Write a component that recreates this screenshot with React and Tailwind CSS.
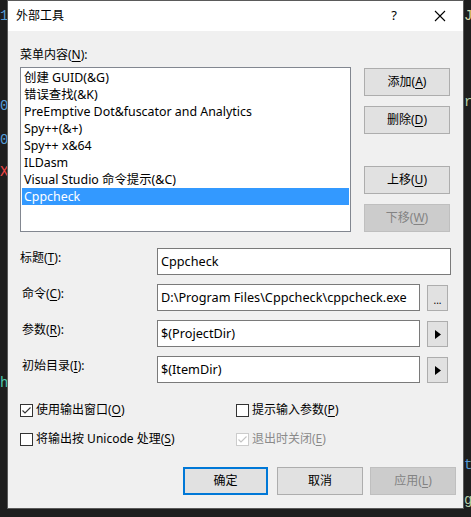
import React from "react";

const font = { fontFamily: "'Noto Sans', 'Noto Sans CJK SC', sans-serif" };

const items = [
  "创建 GUID(&G)",
  "错误查找(&K)",
  "PreEmptive Dot&fuscator and Analytics",
  "Spy++(&+)",
  "Spy++ x&64",
  "ILDasm",
  "Visual Studio 命令提示(&C)",
  "Cppcheck",
];

function U({ children }) {
  return <span className="underline underline-offset-2">{children}</span>;
}

function SideButton({ children, disabled }) {
  return (
    <div
      className={`h-[28px] w-[86px] flex items-center justify-center border text-[12px] ${
        disabled
          ? "bg-[#cccccc] border-[#bfbfbf] text-[#838383]"
          : "bg-[#e1e1e1] border-[#adadad] text-black"
      }`}
    >
      {children}
    </div>
  );
}

function Check({ checked, disabled, children }) {
  return (
    <div className={`flex items-center gap-[3px] h-[16px] ${disabled ? "text-[#8a8a8a]" : "text-black"}`}>
      <div
        className={`w-[13px] h-[13px] border bg-white flex items-center justify-center ${
          disabled ? "border-[#cccccc] bg-[#f0f0f0]" : "border-[#333333]"
        }`}
      >
        {checked && (
          <svg width="11" height="11" viewBox="0 0 11 11">
            <path
              d="M1.5 5.5 L4 8 L9.5 2.5"
              fill="none"
              stroke={disabled ? "#c4c4c4" : "#333333"}
              strokeWidth="1.1"
            />
          </svg>
        )}
      </div>
      <span className="text-[12px] leading-[16px]">{children}</span>
    </div>
  );
}

function FieldRow({ label, value, button, wide, indent }) {
  return (
    <div className="flex items-start h-[27px]">
      <div className={`w-[137px] text-[12px] leading-[16px] pt-[2px] ${indent ? "pl-[2px]" : ""}`}>{label}</div>
      <div
        className={`h-[27px] ${wide ? "w-[294px]" : "w-[263px]"} border border-[#7a7a7a] bg-white flex items-center pl-[3px] text-[12.7px] whitespace-nowrap overflow-hidden`}
      >
        {value}
      </div>
      {button && (
        <div className="ml-[7px] mt-[1px] w-[21px] h-[26px] border border-[#adadad] bg-[#e1e1e1] flex items-center justify-center text-[10px]">
          {button === "dots" ? (
            <span className="leading-none pt-[4px]">...</span>
          ) : (
            <svg width="6" height="9" viewBox="0 0 6 9">
              <path d="M0 0 L6 4.5 L0 9 Z" fill="#000" />
            </svg>
          )}
        </div>
      )}
    </div>
  );
}

export default function App() {
  return (
    <div className="relative w-[471px] h-[517px] bg-[#1e1e1e] overflow-hidden" style={font}>
      <div className="absolute left-0 top-[6px] text-[#569cd6] text-[14px] font-mono">1</div>
      <div className="absolute left-0 top-[96px] text-[#569cd6] text-[14px] font-mono">0</div>
      <div className="absolute left-0 top-[130px] text-[#569cd6] text-[14px] font-mono">0</div>
      <div className="absolute left-0 top-[162px] text-[#f44747] text-[14px] font-mono">X</div>
      <div className="absolute left-0 top-[373px] text-[#4ec9b0] text-[14px] font-mono">h</div>
      <div className="absolute left-[464px] top-[6px] text-[#dcdcaa] text-[14px] font-mono">J</div>
      <div className="absolute left-[464px] top-[92px] text-[#b5cea8] text-[14px] font-mono">r</div>
      <div className="absolute left-[464px] top-[455px] text-[#569cd6] text-[14px] font-mono">t</div>
      <div className="absolute left-[464px] top-[490px] text-[#b5cea8] text-[14px] font-mono">g</div>

      <div className="absolute left-[7px] top-0 w-[457px] h-[509px] border border-[#5a5a5a] bg-[#f0f0f0] flex flex-col">
        <div className="h-[30px] bg-white flex items-center pl-[8px] text-[12px] text-black">
          <span>外部工具</span>
          <span className="ml-auto mr-[37px] text-[13px]">?</span>
          <svg width="12" height="12" viewBox="0 0 12 12" className="mr-[17px]">
            <path d="M1 1 L11 11 M11 1 L1 11" stroke="#000" strokeWidth="1.1" />
          </svg>
        </div>

        <div className="flex flex-col pl-[12px] pr-[7px] text-black">
          <div className="mt-[16px] h-[16px] text-[12px] leading-[16px]">
            菜单内容(<U>N</U>):
          </div>
          <div className="flex mt-[4px]">
            <div className="w-[331px] h-[165px] border border-[#828790] bg-white pt-[1px] px-[1px]">
              {items.map((it, i) => (
                <div
                  key={i}
                  className={`h-[17px] leading-[17px] pl-[2px] text-[12.4px] whitespace-nowrap overflow-hidden ${
                    i === 7 ? "bg-[#3399ff] text-white" : ""
                  }`}
                >
                  {it}
                </div>
              ))}
            </div>
            <div className="ml-[13px] mt-[1px] flex flex-col">
              <SideButton>
                添加(<U>A</U>)
              </SideButton>
              <div className="h-[10px]" />
              <SideButton>
                删除(<U>D</U>)
              </SideButton>
              <div className="h-[32px]" />
              <SideButton>
                上移(<U>U</U>)
              </SideButton>
              <div className="h-[10px]" />
              <SideButton disabled>
                下移(<U>W</U>)
              </SideButton>
            </div>
          </div>

          <div className="mt-[16px] flex flex-col gap-[9px]">
            <FieldRow label={<>标题(<U>T</U>):</>} value="Cppcheck" wide />
            <FieldRow
              label={<>命令(<U>C</U>):</>}
              value="D:\Program Files\Cppcheck\cppcheck.exe"
              button="dots"
              indent
            />
            <FieldRow label={<>参数(<U>R</U>):</>} value="$(ProjectDir)" button="arrow" indent />
            <FieldRow label={<>初始目录(<U>I</U>):</>} value="$(ItemDir)" button="arrow" indent />
          </div>

          <div className="mt-[19px] grid grid-cols-[216px_1fr] gap-y-[13px]">
            <Check checked>
              使用输出窗口(<U>O</U>)
            </Check>
            <Check>
              提示输入参数(<U>P</U>)
            </Check>
            <Check>
              将输出按 Unicode 处理(<U>S</U>)
            </Check>
            <Check checked disabled>
              退出时关闭(<U>E</U>)
            </Check>
          </div>

          <div className="mt-[20px] flex justify-end gap-[9px] text-[12px]">
            <div className="w-[85px] h-[28px] border-2 border-[#0078d7] bg-[#e1e1e1] flex items-center justify-center">
              确定
            </div>
            <div className="w-[86px] h-[28px] border border-[#adadad] bg-[#e1e1e1] flex items-center justify-center mr-[-1px]">
              取消
            </div>
            <div className="w-[86px] h-[28px] border border-[#bfbfbf] bg-[#cccccc] text-[#838383] flex items-center justify-center ml-[-1px]">
              应用(<U>L</U>)
            </div>
          </div>
        </div>
      </div>
    </div>
  );
}
